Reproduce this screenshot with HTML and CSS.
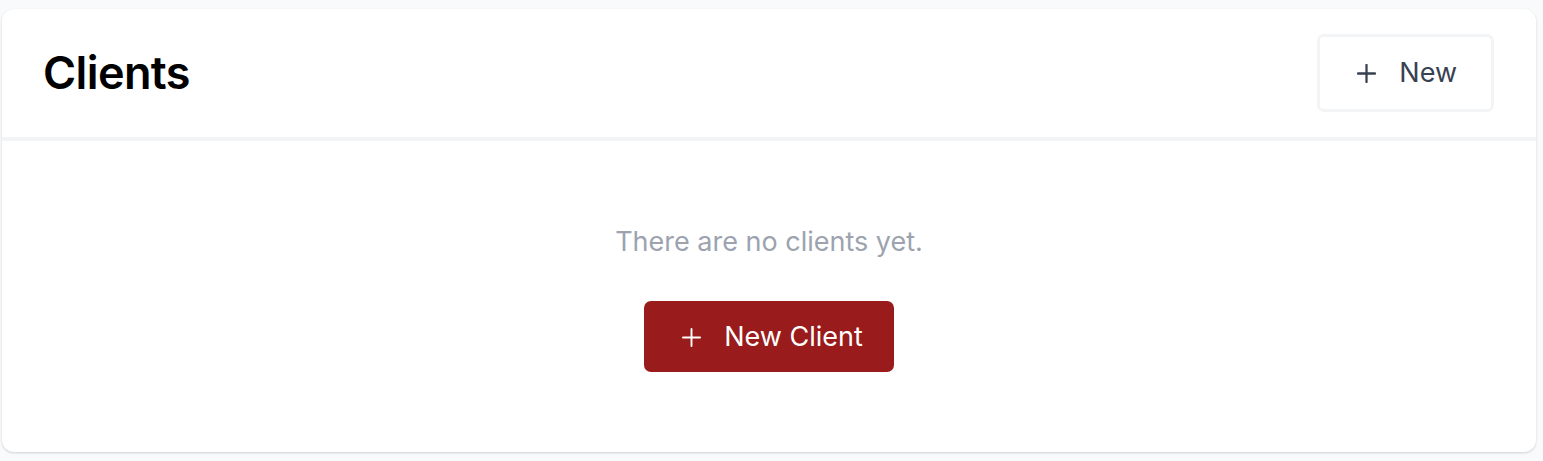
FILE: index.html
```html
<!DOCTYPE html>
<html lang="en">
<head>
    <meta charset="UTF-8">
    <meta name="viewport" content="width=device-width, initial-scale=1.0">
    <title>Clients</title>
    <link rel="stylesheet" href="styles.css">
</head>
<body>

    <!-- Clients card -->
    <div class="card">
        <div class="card-header">
            <h1>Clients</h1>
            <button type="button" class="button button-outline">
                <svg class="icon" viewBox="0 0 20 20" fill="none" stroke="currentColor" stroke-width="2.4" stroke-linecap="round">
                    <path d="M10 1v18M1 10h18"/>
                </svg>
                New
            </button>
        </div>

        <!-- Empty state -->
        <div class="card-body">
            <p class="empty-text">There are no clients yet.</p>
            <button type="button" class="button button-primary">
                <svg class="icon" viewBox="0 0 20 20" fill="none" stroke="currentColor" stroke-width="2" stroke-linecap="round">
                    <path d="M10 1v18M1 10h18"/>
                </svg>
                New Client
            </button>
        </div>
    </div>

</body>
</html>
```

FILE: styles.css
```css
body {
    font-family: Inter, "Noto Sans", sans-serif;
    margin: 0;
    padding: 9px 7px 9px 2px;
    background-color: #f9fafb;
}
.card {
    background-color: #fff;
    border-radius: 12px;
    box-shadow: 0 1px 3px rgba(0, 0, 0, 0.12), 0 1px 2px rgba(0, 0, 0, 0.06);
    overflow: hidden;
}
.card-header {
    display: flex;
    align-items: center;
    justify-content: space-between;
    height: 128px;
    padding: 0 42px 0 41px;
    border-bottom: 4px solid #f3f4f6;
}
h1 {
    margin: 0;
    font-size: 45px;
    line-height: 54px;
    font-weight: 600;
    letter-spacing: -0.6px;
    color: #000;
}
.card-body {
    display: flex;
    flex-direction: column;
    align-items: center;
    padding: 80px 0 80px;
}
.empty-text {
    margin: 0 0 38px;
    font-size: 27px;
    line-height: 42px;
    color: #9ca3af;
}
.button {
    display: flex;
    align-items: center;
    gap: 23px;
    font-family: inherit;
    font-size: 27px;
    line-height: 42px;
    border-radius: 7px;
    cursor: pointer;
}
.icon {
    width: 19px;
    height: 19px;
}
.button-outline {
    padding: 15px 34px 15px 37px;
    background-color: #fff;
    color: #374151;
    border: 3px solid #f3f4f6;
}
.button-primary {
    padding: 15px 31px 14px 38px;
    background-color: #991b1b;
    color: #fff;
    border: none;
}
.button-primary:hover {
    background-color: #7f1d1d;
}
```
